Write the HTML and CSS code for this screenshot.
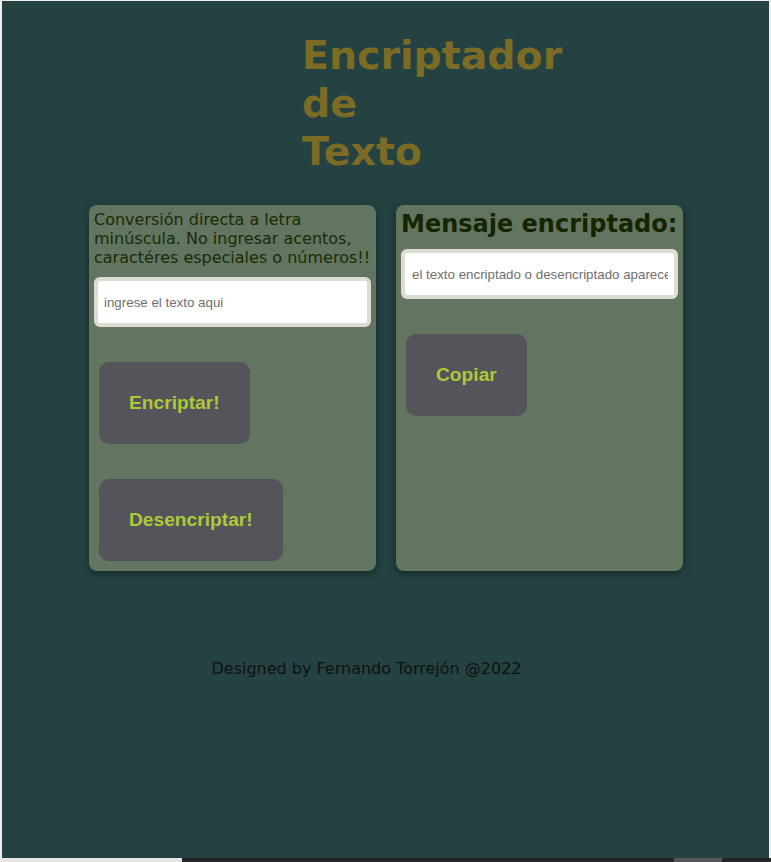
FILE: index.html
```html
<!DOCTYPE html>
<html lang="es">
<head>
    <meta charset="UTF-8">
    <meta name="viewport" content="width=device-width, initial-scale=1.0">
    <title>Encriptador de Texto</title>
    <link rel="stylesheet" href="styles.css">
</head>
<body>
    <div class="page">
        <h1 class="titulo">Encriptador de Texto</h1>
        <div class="paneles">
            <div class="panel">
                <p class="aviso">Conversión directa a letra minúscula. No ingresar acentos, caractéres especiales o números!!</p>
                <input type="text" class="campo" id="entrada" placeholder="ingrese el texto aqui">
                <button class="boton" id="encriptar">Encriptar!</button>
                <button class="boton" id="desencriptar">Desencriptar!</button>
            </div>
            <div class="panel">
                <h2 class="subtitulo">Mensaje encriptado:</h2>
                <input type="text" class="campo campo-salida" id="salida" placeholder="el texto encriptado o desencriptado aparecera aqui" readonly>
                <button class="boton" id="copiar">Copiar</button>
            </div>
        </div>
        <footer class="pie">Designed by Fernando Torrejón @2022</footer>
    </div>
    <div class="barra">
        <span class="barra-clara"></span>
        <span class="barra-oscura"></span>
        <span class="barra-pulgar"></span>
        <span class="barra-fin"></span>
    </div>
    <script>
        const entrada = document.getElementById("entrada");
        const salida = document.getElementById("salida");
        const llaves = [["e", "enter"], ["i", "imes"], ["a", "ai"], ["o", "ober"], ["u", "ufat"]];

        function encriptar(texto) {
            return texto.replace(/[eiaou]/g, (letra) => llaves.find((l) => l[0] === letra)[1]);
        }

        function desencriptar(texto) {
            llaves.slice().reverse().forEach(([letra, clave]) => {
                texto = texto.split(clave).join(letra);
            });
            return texto;
        }

        document.getElementById("encriptar").addEventListener("click", () => {
            salida.value = encriptar(entrada.value.toLowerCase());
        });
        document.getElementById("desencriptar").addEventListener("click", () => {
            salida.value = desencriptar(entrada.value.toLowerCase());
        });
        document.getElementById("copiar").addEventListener("click", () => {
            salida.select();
            document.execCommand("copy");
        });
    </script>
</body>
</html>
```

FILE: styles.css
```css
body {
    margin: 0;
    background: #eeeeee;
    font-family: "DejaVu Sans", Verdana, sans-serif;
}
.page {
    margin: 1px 2px 0;
    height: 857px;
    background: #244242;
    overflow: hidden;
}
/* una palabra por renglón */
.titulo {
    width: 0;
    margin: 30px 0 0 300px;
    font-size: 39.5px;
    line-height: 48px;
    color: #7b6b24;
}
.paneles {
    display: flex;
    justify-content: center;
    gap: 20px;
    margin-top: 30px;
    padding-left: 1px;
}
.panel {
    box-sizing: border-box;
    width: 287px;
    height: 366px;
    padding: 5px;
    background: #627560;
    border-radius: 8px;
    box-shadow: 0 2px 8px rgba(0, 0, 0, 0.45);
}
.aviso {
    margin: 0;
    font-size: 16px;
    line-height: 19px;
    color: #1c2a05;
}
.subtitulo {
    margin: 0;
    font-size: 24px;
    line-height: 29px;
    color: #162400;
}
.campo {
    display: block;
    box-sizing: border-box;
    width: 100%;
    height: 50px;
    margin-top: 10px;
    padding: 0 6px;
    border: 4px solid #dddcd5;
    border-radius: 6px;
    background: #fff;
    font-family: "Liberation Sans", Arial, sans-serif;
    font-size: 13.33px;
    color: #333;
}
.campo::placeholder {
    color: #6f6f6f;
}
.campo-salida {
    padding-left: 7px;
}
.boton {
    display: block;
    margin: 35px 0 0 5px;
    padding: 30px;
    border: none;
    border-radius: 10px;
    background: #55545b;
    color: #abca38;
    font-family: "Liberation Sans", Arial, sans-serif;
    font-size: 19.2px;
    font-weight: bold;
    line-height: 22px;
    cursor: pointer;
}
.boton:hover {
    background: #4a4950;
}
.pie {
    margin-top: 88px;
    padding-right: 38px;
    text-align: center;
    font-size: 16px;
    color: #111;
}
.barra {
    display: flex;
    height: 4px;
}
.barra-clara {
    width: 182px;
    background: #e6e6e6;
}
.barra-oscura {
    width: 492px;
    background: #222428;
}
.barra-pulgar {
    width: 48px;
    background: #555659;
}
.barra-fin {
    flex: 1;
    background: #222428;
}
```
